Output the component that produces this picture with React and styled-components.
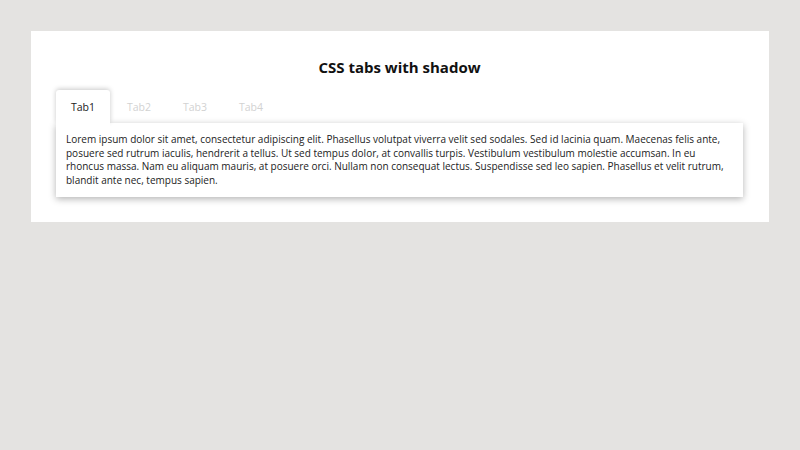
import { useState } from "react";
import styled, { createGlobalStyle } from "styled-components";

const GlobalStyle = createGlobalStyle`
  html, body {
    margin: 0;
    padding: 0;
    background: #e4e3e1;
    font-family: "Open Sans", "Liberation Sans", sans-serif;
  }
`;

const Page = styled.div`
  padding: 31px;
`;

const Card = styled.div`
  background: #fff;
  padding: 22px 26px 25px 25px;
`;

const Title = styled.h1`
  margin: 0 0 9px;
  font-size: 15px;
  font-weight: 700;
  line-height: 28px;
  text-align: center;
  color: #111;
`;

const TabBar = styled.ul`
  display: flex;
  list-style: none;
  margin: 0;
  padding: 0;
  position: relative;
  z-index: 2;
`;

const Tab = styled.li`
  width: 54px;
  height: 33px;
  margin-right: 2px;
  display: flex;
  align-items: center;
  justify-content: center;
  font-size: 10.5px;
  cursor: pointer;
  border-radius: 3px 3px 0 0;
  color: ${(p) => (p.$active ? "#222" : "#d2d2d2")};
  background: ${(p) => (p.$active ? "#fff" : "transparent")};
  box-shadow: ${(p) => (p.$active ? "0 -1px 5px rgba(0,0,0,0.22)" : "none")};
  position: relative;

  /* white strip that hides the panel shadow under the open tab */
  &::after {
    content: "";
    display: ${(p) => (p.$active ? "block" : "none")};
    position: absolute;
    left: 0;
    right: 0;
    bottom: -6px;
    height: 7px;
    background: #fff;
  }
`;

const Panel = styled.div`
  position: relative;
  z-index: 1;
  background: #fff;
  padding: 10px 10px 10px 10px;
  font-size: 10px;
  line-height: 13.6px;
  color: #222;
  box-shadow: 0 2px 7px rgba(0, 0, 0, 0.3);
`;

const texts = [
  "Lorem ipsum dolor sit amet, consectetur adipiscing elit. Phasellus volutpat viverra velit sed sodales. Sed id lacinia quam. Maecenas felis ante, posuere sed rutrum iaculis, hendrerit a tellus. Ut sed tempus dolor, at convallis turpis. Vestibulum vestibulum molestie accumsan. In eu rhoncus massa. Nam eu aliquam mauris, at posuere orci. Nullam non consequat lectus. Suspendisse sed leo sapien. Phasellus et velit rutrum, blandit ante nec, tempus sapien.",
  "Sed id lacinia quam. Maecenas felis ante, posuere sed rutrum iaculis, hendrerit a tellus.",
  "Ut sed tempus dolor, at convallis turpis. Vestibulum vestibulum molestie accumsan.",
  "Nullam non consequat lectus. Suspendisse sed leo sapien.",
];

const App = () => {
  const [active, setActive] = useState(0);

  return (
    <Page>
      <GlobalStyle />
      <Card>
        <Title>CSS tabs with shadow</Title>
        <TabBar>
          {["Tab1", "Tab2", "Tab3", "Tab4"].map((t, i) => (
            <Tab key={t} $active={active === i} onClick={() => setActive(i)}>
              {t}
            </Tab>
          ))}
        </TabBar>
        <Panel>{texts[active]}</Panel>
      </Card>
    </Page>
  );
};

export default App;
